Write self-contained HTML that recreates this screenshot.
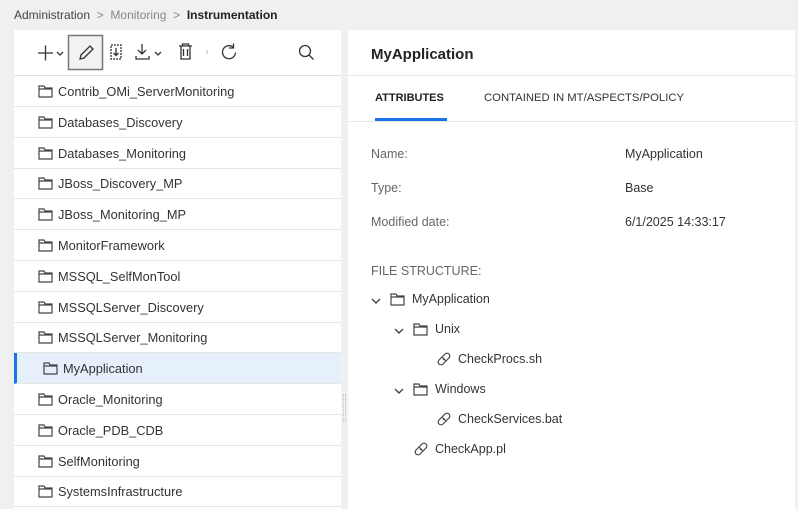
<!DOCTYPE html>
<html><head><style>
*{margin:0;padding:0;box-sizing:border-box}
body{width:798px;height:509px;background:#f0f0f0;font-family:"Liberation Sans",sans-serif;font-size:12.5px;color:#333;position:relative;overflow:hidden}
.a{position:absolute}
.bc{top:8px;left:14px;font-size:12px;color:#444}
.bc .g{color:#888}
.bc b{color:#222}
#left{left:14px;top:30px;width:327px;height:479px;background:#fff}
#right{left:348px;top:30px;width:447px;height:479px;background:#fff}
.row{position:absolute;left:0;width:327px;height:31px;border-bottom:1px solid #e6e6e6;line-height:31px;padding-left:44px;color:#333;font-size:12.8px}
.row svg{position:absolute;left:24px;top:9px}
.sel{background:#e5f0fb;border-left:3px solid #1a73e8;padding-left:46px}
.sel svg{left:26px}
.lbl{color:#666;font-size:12.5px}
</style></head><body>
<div class="a bc">Administration <span class="g">&nbsp;&gt;&nbsp;</span> <span class="g">Monitoring</span> <span class="g">&nbsp;&gt;&nbsp;</span> <b>Instrumentation</b></div>
<div id="left" class="a">
 <div class="a" style="left:0;top:45px;width:327px;border-bottom:1px solid #e0e0e0"></div>
 <svg class="a" style="left:0;top:0" width="327" height="45" viewBox="0 0 327 45" fill="none" stroke="#333" stroke-width="1.3">
  <path d="M24 23h15M31.5 15.5v15"/><path d="M43 22l3 3 3-3"/>
  <rect x="54.5" y="5.5" width="34" height="34" stroke="#777" stroke-width="1.5" fill="#f2f2f2"/>
  <path d="M66 29l1-4 9-9 3 3-9 9z"/>
  <rect x="97" y="15" width="10" height="14" stroke-dasharray="2 1"/><path d="M102 18v7M99.5 23l2.5 2.5 2.5-2.5"/>
  <path d="M128 14v10M124 20l4 4 4-4M122 26v3h13v-3"/><path d="M141 22l3 3 3-3"/>
  <path d="M165 16h13M168.5 16v-2h6v2M167 16v13h9V16M169.5 19v7M173.5 19v7"/>
  <path d="M193 20v4" stroke="#ccc"/>
  <path d="M219.5 17.5a6.5 6.5 0 1 0 2 5M219.5 13.5v4.5h-4.5"/>
  <circle cx="291" cy="21" r="5.5"/><path d="M295 25l4.5 4.5"/>
 </svg>
 <div id="rows"></div>
</div>
<div id="right" class="a">
 <div class="a" style="left:23px;top:16px;font-size:15px;font-weight:bold;color:#222">MyApplication</div>
 <div class="a" style="left:0;top:45px;width:447px;border-bottom:1px solid #e6e6e6"></div>
 <div class="a" style="left:27px;top:62px;font-size:11px;font-weight:bold;color:#222">ATTRIBUTES</div>
 <div class="a" style="left:136px;top:62px;font-size:11.3px;color:#333">CONTAINED IN MT/ASPECTS/POLICY</div>
 <div class="a" style="left:27px;top:88px;width:72px;height:3px;background:#1a73e8"></div>
 <div class="a" style="left:0;top:91px;width:447px;border-bottom:1px solid #e6e6e6"></div>
 <div class="a lbl" style="left:23px;top:117px">Name:</div><div class="a" style="left:277px;top:117px">MyApplication</div>
 <div class="a lbl" style="left:23px;top:151px">Type:</div><div class="a" style="left:277px;top:151px">Base</div>
 <div class="a lbl" style="left:23px;top:185px">Modified date:</div><div class="a" style="left:277px;top:185px">6/1/2025 14:33:17</div>
 <div class="a lbl" style="left:23px;top:234px">FILE STRUCTURE:</div>
 <div id="tree"></div>
</div>
<div class="a" style="left:343px;top:394px;width:3px;height:28px;border-left:1px dotted #bbb;border-right:1px dotted #bbb"></div>
<script>
var F='<svg width="15" height="13" viewBox="0 0 15 13" fill="none" stroke="#444" stroke-width="1.2"><path d="M1 1h5l1 2h7v9H1zM1 4h13"/></svg>';
var C='<svg width="16" height="16" viewBox="0 0 16 16" fill="none" stroke="#444" stroke-width="1.2"><path d="M3 9l6-6a2.5 2.5 0 0 1 4 4l-6 6a2.5 2.5 0 0 1-4-4zM6 6l4 4M7 8l1 1"/></svg>';
var V='<svg width="10" height="8" viewBox="0 0 10 8" fill="none" stroke="#444" stroke-width="1.4"><path d="M1 2l4 4 4-4"/></svg>';
var n=["Contrib_OMi_ServerMonitoring","Databases_Discovery","Databases_Monitoring","JBoss_Discovery_MP","JBoss_Monitoring_MP","MonitorFramework","MSSQL_SelfMonTool","MSSQLServer_Discovery","MSSQLServer_Monitoring","MyApplication","Oracle_Monitoring","Oracle_PDB_CDB","SelfMonitoring","SystemsInfrastructure"];
var h='';n.forEach(function(t,i){h+='<div class="row'+(i==9?' sel':'')+'" style="top:'+(46+i*30.8)+'px">'+F+t+'</div>'});
document.getElementById('rows').innerHTML=h;
var tr=[[0,1,'F','MyApplication'],[1,1,'F','Unix'],[2,0,'C','CheckProcs.sh'],[1,1,'F','Windows'],[2,0,'C','CheckServices.bat'],[1,0,'C','CheckApp.pl']];
h='';tr.forEach(function(r,i){var y=262+i*30,x=42+r[0]*23;
 if(r[1])h+='<div class="a" style="left:'+(x-19)+'px;top:'+(y+2)+'px">'+V+'</div>';
 h+='<div class="a" style="left:'+x+'px;top:'+(y+(r[2]=='F'?1:-1))+'px">'+(r[2]=='F'?F:C)+'</div>';
 h+='<div class="a" style="left:'+(x+22)+'px;top:'+y+'px">'+r[3]+'</div>';});
document.getElementById('tree').innerHTML=h;
</script>
</body></html>
